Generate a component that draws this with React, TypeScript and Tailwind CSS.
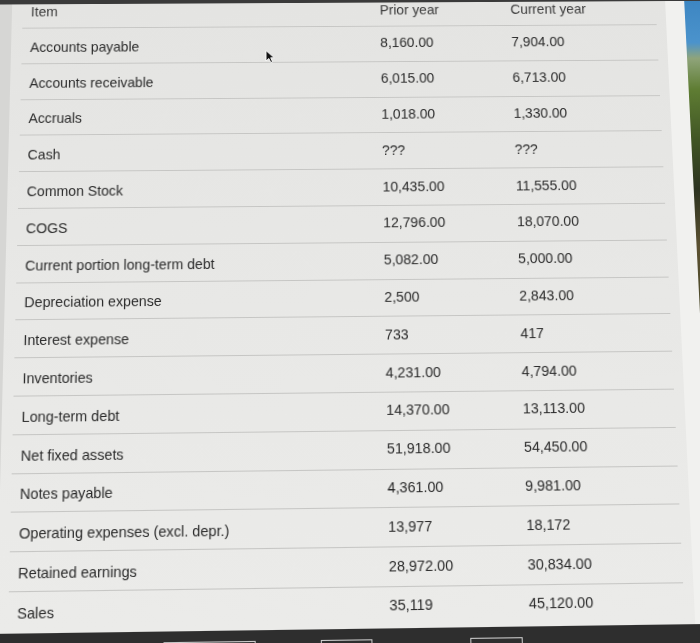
import React from "react";

const rows: [string, string, string][] = [
  ["Accounts payable", "8,160.00", "7,904.00"],
  ["Accounts receivable", "6,015.00", "6,713.00"],
  ["Accruals", "1,018.00", "1,330.00"],
  ["Cash", "???", "???"],
  ["Common Stock", "10,435.00", "11,555.00"],
  ["COGS", "12,796.00", "18,070.00"],
  ["Current portion long-term debt", "5,082.00", "5,000.00"],
  ["Depreciation expense", "2,500", "2,843.00"],
  ["Interest expense", "733", "417"],
  ["Inventories", "4,231.00", "4,794.00"],
  ["Long-term debt", "14,370.00", "13,113.00"],
  ["Net fixed assets", "51,918.00", "54,450.00"],
  ["Notes payable", "4,361.00", "9,981.00"],
  ["Operating expenses (excl. depr.)", "13,977", "18,172"],
  ["Retained earnings", "28,972.00", "30,834.00"],
  ["Sales", "35,119", "45,120.00"],
];

function Cursor() {
  return (
    <svg
      className="absolute left-[261px] top-[50px]"
      width="11"
      height="15"
      viewBox="0 0 11 15"
    >
      <path
        d="M1 1 L1 12 L3.8 9.4 L5.8 13.6 L7.6 12.8 L5.7 8.7 L9.4 8.7 Z"
        fill="#111"
        stroke="#fff"
        strokeWidth="0.9"
        strokeLinejoin="round"
      />
    </svg>
  );
}

export default function App() {
  return (
    <div className="relative h-[643px] w-[700px] overflow-hidden bg-[#2c2c2c] font-['Liberation_Sans',Arial,sans-serif] text-[14.2px] leading-[20px] text-[#2b2b2b]">
      <div className="-ml-[20px] -mt-[20px] w-[800px] origin-[269px_340px] [transform:perspective(1000px)_skewY(-0.55deg)_rotateY(0.8deg)_rotateX(6.2deg)]">
        <div className="h-[9.5px] bg-[#3a3a3a]" />
        <div className="flex h-[632.3px]">
          <div className="w-[25px] bg-[#d6d6d4]" />
          <div className="relative w-[678px] bg-[linear-gradient(to_bottom,#e4e4e2,#e8e8e6_50%,#ebebe9)] pl-[11px] pr-[10px]">
            <div className="grid h-[26.5px] grid-cols-[360.5px_136px_1fr] items-start border-b border-[#c6c6c4] pl-[8.5px] text-[#3a3a3a]">
              <span className="-mt-[1.5px]">Item</span>
              <span className="-mt-[1.5px]">Prior year</span>
              <span className="-mt-[1.5px]">Current year</span>
            </div>
            {rows.map(([label, prior, current], i) => {
              const last = i === rows.length - 1;
              return (
                <div
                  key={label}
                  className={
                    last
                      ? "grid h-[38.8px] grid-cols-[360.5px_136px_1fr] items-center pb-[2px] pl-[8.5px]"
                      : "grid h-[37.8px] grid-cols-[360.5px_136px_1fr] items-center border-b border-[#c6c6c4] pl-[8.5px]"
                  }
                >
                  <span className="pt-[3px]">{label}</span>
                  <span className="pb-[2px]">{prior}</span>
                  <span className="pb-[2px]">{current}</span>
                </div>
              );
            })}
            <Cursor />
          </div>
          <div className="w-[20px] bg-[#f1f1ef]" />
          <div className="flex-1 bg-[linear-gradient(to_bottom,#3d86c2_0px,#4b93cc_45px,#8fa47a_62px,#5f7d33_95px,#3f5424_150px,#2c3320_200px,#5b5030_260px,#4a4a2c_330px,#3b3b28_640px)]" />
        </div>
        <div className="flex h-[60px] bg-[#2e2e2e] pl-[186px] pt-[10px]">
          <div className="h-[40px] w-[89px] border-[1.5px] border-[#cfcfcf]" />
          <div className="ml-[63px] h-[40px] w-[50px] border-[1.5px] border-[#cfcfcf]" />
          <div className="ml-[95px] h-[40px] w-[51px] border-[1.5px] border-[#cfcfcf]" />
        </div>
      </div>
    </div>
  );
}
